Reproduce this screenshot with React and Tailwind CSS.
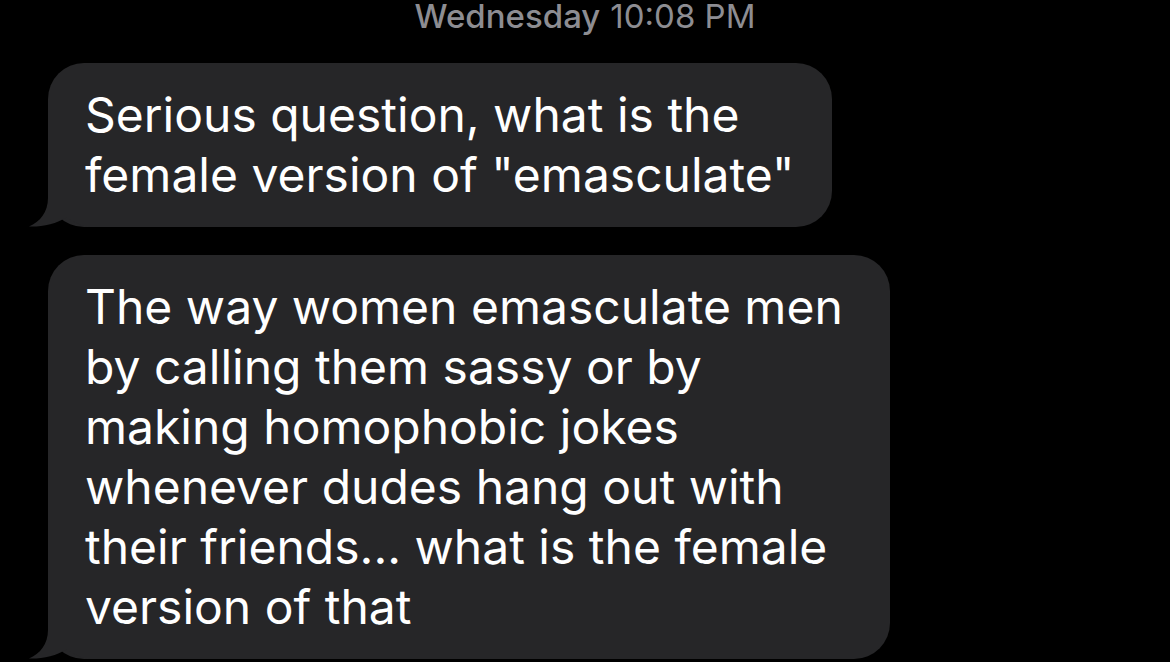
import React from 'react';

const messages = [
  {
    id: 1,
    width: 'w-[784px]',
    lines: ['Serious question, what is the', 'female version of "emasculate"'],
  },
  {
    id: 2,
    width: 'w-[842px]',
    lines: [
      'The way women emasculate men',
      'by calling them sassy or by',
      'making homophobic jokes',
      'whenever dudes hang out with',
      'their friends... what is the female',
      'version of that',
    ],
  },
];

// little curled tail on the bottom-left corner of an incoming bubble
const Tail = () => (
  <svg
    className="absolute bottom-0 left-[-20px]"
    width="62"
    height="37"
    viewBox="0 0 62 37"
    fill="#262628"
  >
    <path d="M20 0 L20 8 C20 22 12 32 1 36.5 C14 37 28 34 39 27 C47 33 55 37 62 37 L62 0 Z" />
  </svg>
);

const Bubble = ({ width, lines }) => (
  <div className={`relative ${width} rounded-[36px] bg-[#262628] pl-[37px] pr-4 py-[22px]`}>
    <div className="relative z-10 text-[48px] leading-[60px] text-white">
      {lines.map((line) => (
        <div key={line} className="whitespace-nowrap">
          {line}
        </div>
      ))}
    </div>
    <Tail />
  </div>
);

const App = () => {
  return (
    <div
      className="h-[662px] w-full overflow-hidden bg-black"
      style={{ fontFamily: 'Inter, "Noto Sans", sans-serif' }}
    >
      <div className="flex h-[32px] items-center justify-center text-[33px] leading-[33px] text-[#8d8d92]">
        <span className="font-medium">Wednesday</span>
        <span className="ml-[10px]">10:08 PM</span>
      </div>
      <div className="flex flex-col gap-[28px] pl-[48px] pt-[31px]">
        {messages.map((m) => (
          <Bubble key={m.id} width={m.width} lines={m.lines} />
        ))}
      </div>
    </div>
  );
};

export default App;
